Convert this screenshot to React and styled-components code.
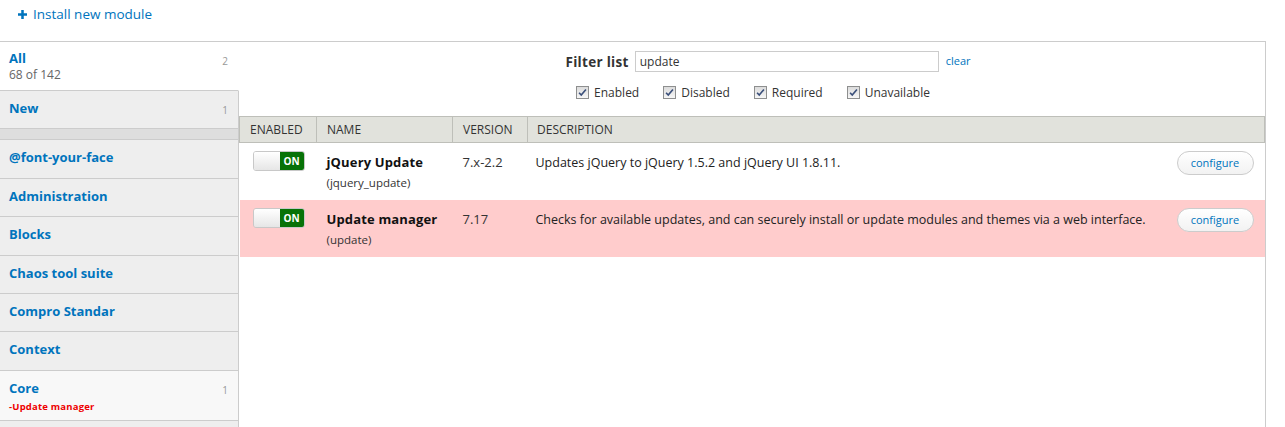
import React from 'react'
import styled, { createGlobalStyle } from 'styled-components'

const GlobalStyle = createGlobalStyle`
  html, body {
    margin: 0;
    padding: 0;
    background: #fff;
  }
  body {
    font-family: 'Open Sans', 'DejaVu Sans', sans-serif;
    font-size: 12px;
    color: #333;
  }
`

const blue = '#0074bd'

const categories = [
  { name: '@font-your-face' },
  { name: 'Administration' },
  { name: 'Blocks' },
  { name: 'Chaos tool suite' },
  { name: 'Compro Standar' },
  { name: 'Context' },
  { name: 'Core', count: 1, note: '-Update manager', light: true },
]

const modules = [
  {
    name: 'jQuery Update',
    machine: 'jquery_update',
    version: '7.x-2.2',
    description: 'Updates jQuery to jQuery 1.5.2 and jQuery UI 1.8.11.',
  },
  {
    name: 'Update manager',
    machine: 'update',
    version: '7.17',
    description:
      'Checks for available updates, and can securely install or update modules and themes via a web interface.',
    highlight: true,
  },
]

const filters = ['Enabled', 'Disabled', 'Required', 'Unavailable']

function App() {
  return (
    <Page>
      <GlobalStyle />
      <ActionLinks>
        <PlusIcon viewBox="0 0 10 10">
          <path d="M3.6 0h2.8v3.6H10v2.8H6.4V10H3.6V6.4H0V3.6h3.6z" fill={blue} />
        </PlusIcon>
        <ActionLink href="#">Install new module</ActionLink>
      </ActionLinks>

      <Wrapper>
        <Sidebar>
          <Tab variant="selected">
            <TabTitle>All</TabTitle>
            <TabCount>2</TabCount>
            <TabSummary>68 of 142</TabSummary>
          </Tab>
          <Tab>
            <TabTitle>New</TabTitle>
            <TabCount>1</TabCount>
          </Tab>
          <TabDivider />
          {categories.map((c) => (
            <Tab key={c.name} variant={c.note ? 'tall' : undefined} light={c.light}>
              <TabTitle>{c.name}</TabTitle>
              {c.count && <TabCount>{c.count}</TabCount>}
              {c.note && <TabNote>{c.note}</TabNote>}
            </Tab>
          ))}
          <Tab />
        </Sidebar>

        <Content>
          <FilterArea>
            <FilterRow>
              <FilterLabel>Filter list</FilterLabel>
              <FilterInput defaultValue="update" />
              <ClearLink href="#">clear</ClearLink>
            </FilterRow>
            <CheckRow>
              {filters.map((f) => (
                <CheckItem key={f}>
                  <CheckBox>
                    <svg viewBox="0 0 10 10" width="9" height="9">
                      <path
                        d="M1.2 5.2l2.4 2.6L8.8 1.6"
                        stroke="#3a4f7a"
                        strokeWidth="1.8"
                        fill="none"
                      />
                    </svg>
                  </CheckBox>
                  {f}
                </CheckItem>
              ))}
            </CheckRow>
          </FilterArea>

          <Table>
            <thead>
              <tr>
                <Th width={77}>Enabled</Th>
                <Th width={136}>Name</Th>
                <Th width={75}>Version</Th>
                <Th>Description</Th>
                <Th width={100} />
              </tr>
            </thead>
            <tbody>
              {modules.map((m) => (
                <Row key={m.machine} highlight={m.highlight}>
                  <Td>
                    <Toggle>
                      <ToggleKnob />
                      <ToggleOn>ON</ToggleOn>
                    </Toggle>
                  </Td>
                  <Td>
                    <ModuleName>{m.name}</ModuleName>
                    <MachineName>({m.machine})</MachineName>
                  </Td>
                  <Td>
                    <Version>{m.version}</Version>
                  </Td>
                  <Td>
                    <Description>{m.description}</Description>
                  </Td>
                  <Td align="right">
                    <ConfigureButton href="#">configure</ConfigureButton>
                  </Td>
                </Row>
              ))}
            </tbody>
          </Table>
        </Content>
      </Wrapper>
    </Page>
  )
}

export default App

const Page = styled.div`
  width: 1285px;
  height: 427px;
  overflow: hidden;
`

const ActionLinks = styled.div`
  display: flex;
  align-items: center;
  height: 28px;
  padding: 0 0 13px 18px;
`

const PlusIcon = styled.svg`
  width: 9px;
  height: 9px;
  margin-right: 6px;
`

const ActionLink = styled.a`
  color: ${blue};
  text-decoration: none;
  font-size: 13.5px;
`

const Wrapper = styled.div`
  display: flex;
  width: 1266px;
  border-top: 1px solid #ccc;
  box-sizing: border-box;
  border-right: 1px solid #ccc;
  min-height: 400px;
`

const Sidebar = styled.div`
  width: 239px;
  flex-shrink: 0;
  display: flex;
  flex-direction: column;
`

const tabHeight = { selected: '49px', tall: '50.5px' }

const Tab = styled.div`
  position: relative;
  box-sizing: border-box;
  flex-shrink: 0;
  height: ${(p) => tabHeight[p.variant] || '38.4px'};
  padding: ${(p) => (p.variant === 'selected' ? '8px 10px 0 9px' : '9px 10px 0 9px')};
  background: ${(p) => (p.variant === 'selected' ? '#fff' : p.light ? '#f8f8f8' : '#eee')};
  border-right: 1px solid ${(p) => (p.variant === 'selected' ? 'transparent' : '#ccc')};
  border-bottom: 1px solid #ccc;
`

const TabTitle = styled.div`
  color: ${blue};
  font-weight: bold;
  font-size: 13px;
  line-height: 17px;
`

const TabCount = styled.span`
  position: absolute;
  top: 12px;
  right: 10px;
  color: #999;
  font-size: 10px;
`

const TabSummary = styled.div`
  color: #666;
  font-size: 12px;
  line-height: 16px;
`

const TabNote = styled.div`
  color: #e00;
  font-weight: bold;
  font-size: 9.5px;
  letter-spacing: 0.2px;
  line-height: 14px;
  margin-top: 3px;
`

const TabDivider = styled.div`
  flex-shrink: 0;
  height: 10px;
  background: #dedede;
  border-right: 1px solid #ccc;
  border-bottom: 1px solid #ccc;
`

const Content = styled.div`
  flex: 1;
  display: flex;
  flex-direction: column;
  min-width: 0;
`

const FilterArea = styled.div`
  height: 74px;
  display: flex;
  flex-direction: column;
  align-items: center;
  padding-top: 9px;
  box-sizing: border-box;
`

const FilterRow = styled.div`
  display: flex;
  align-items: center;
  margin-left: 32px;
`

const FilterLabel = styled.label`
  font-weight: bold;
  font-size: 13.5px;
  letter-spacing: 0.3px;
  margin-right: 6px;
`

const FilterInput = styled.input`
  width: 304px;
  height: 21px;
  box-sizing: border-box;
  border: 1px solid #ccc;
  padding: 0 4px;
  font-family: inherit;
  font-size: 12px;
  color: #333;
  outline: none;
`

const ClearLink = styled.a`
  color: ${blue};
  text-decoration: none;
  font-size: 11px;
  margin-left: 7px;
  margin-top: -3px;
`

const CheckRow = styled.div`
  display: flex;
  gap: 24px;
  margin-top: 12px;
  margin-left: 2px;
`

const CheckItem = styled.label`
  display: flex;
  align-items: center;
  font-size: 12px;
  color: #333;
`

const CheckBox = styled.span`
  width: 11px;
  height: 11px;
  border: 1px solid #8e8f8f;
  background: linear-gradient(#dcdcdc, #f6f6f6);
  display: inline-flex;
  align-items: center;
  justify-content: center;
  margin-right: 5px;
`

const Table = styled.table`
  width: 100%;
  border-collapse: collapse;
  table-layout: fixed;
`

const Th = styled.th`
  width: ${(p) => (p.width ? p.width + 'px' : 'auto')};
  background: #e1e2dc;
  border: 1px solid #bebfb9;
  text-align: left;
  font-weight: normal;
  text-transform: uppercase;
  font-size: 12px;
  color: #333;
  height: 26px;
  padding: 0 10px;
  box-sizing: border-box;
  &:nth-child(4) {
    border-right: none;
    padding-left: 9px;
  }
  &:last-child {
    border-left: none;
  }
`

const Row = styled.tr`
  background: ${(p) => (p.highlight ? '#ffcccc' : '#fff')};
`

const Td = styled.td`
  vertical-align: top;
  height: 57px;
  box-sizing: border-box;
  padding: 11px 10px 0 10px;
  text-align: ${(p) => p.align || 'left'};
  &:first-child {
    padding: 8px 10px 0 13px;
  }
  &:nth-child(4) {
    padding-left: 8px;
  }
  &:last-child {
    padding: 8px 11px 0 10px;
  }
`

const Toggle = styled.div`
  display: flex;
  width: 52px;
  height: 20px;
  box-sizing: border-box;
  border: 1px solid #c8c8c8;
  border-radius: 3px;
  overflow: hidden;
`

const ToggleKnob = styled.div`
  flex: 1;
  background: linear-gradient(#fff, #e6e6e6);
`

const ToggleOn = styled.div`
  width: 24px;
  background: #077207;
  color: #fff;
  font-weight: bold;
  font-size: 10px;
  line-height: 18px;
  text-align: center;
`

const ModuleName = styled.div`
  font-weight: bold;
  font-size: 13px;
  letter-spacing: 0.15px;
  line-height: 17px;
  color: #111;
`

const MachineName = styled.div`
  font-size: 11.5px;
  line-height: 14px;
  margin-top: 5px;
  color: #333;
`

const Version = styled.div`
  font-size: 13px;
  line-height: 17px;
`

const Description = styled.div`
  font-size: 12.5px;
  line-height: 17px;
  color: #222;
`

const ConfigureButton = styled.a`
  display: inline-block;
  box-sizing: border-box;
  width: 77px;
  height: 24px;
  line-height: 22px;
  text-align: center;
  border: 1px solid #ccc;
  border-radius: 12px;
  background: linear-gradient(#fff, #f2f2f2);
  color: ${blue};
  text-decoration: none;
  font-size: 11px;
`
